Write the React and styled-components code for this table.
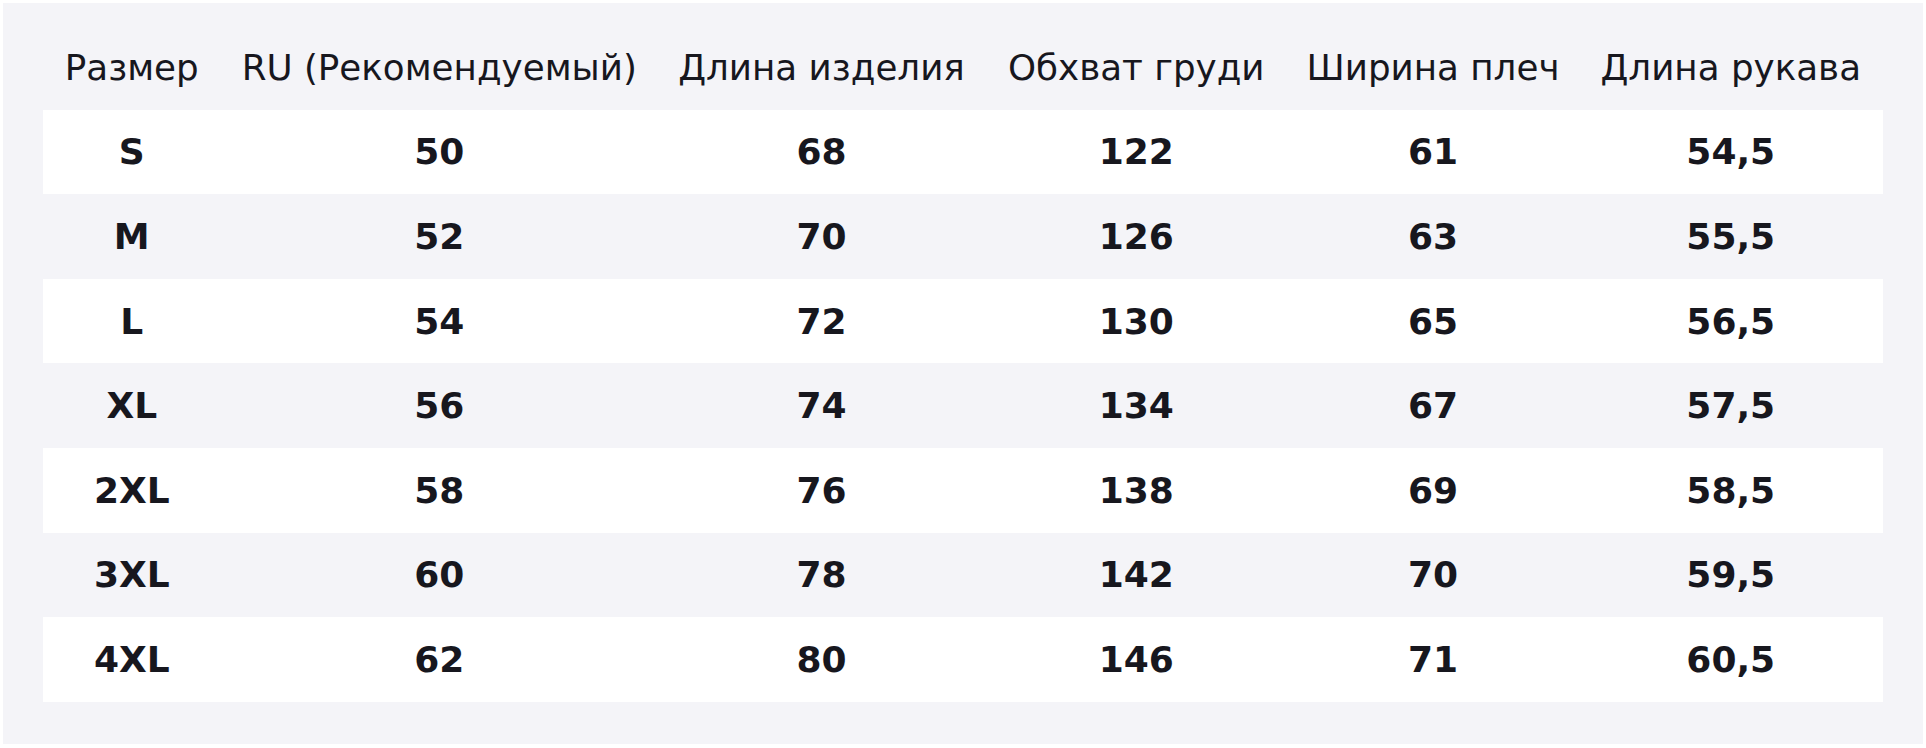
import styled, { createGlobalStyle } from "styled-components";

const GlobalStyle = createGlobalStyle`
  html, body {
    margin: 0;
    background: #ffffff;
  }
  body {
    padding: 3px;
    font-family: "DejaVu Sans", "Noto Sans", sans-serif;
  }
`;

const Panel = styled.div`
  width: 1920px;
  height: 741px;
  box-sizing: border-box;
  background: #f4f4f8;
  padding: 22px 40px 0 40px;
`;

const SizeTable = styled.table`
  width: 1840px;
  border-collapse: collapse;
  table-layout: fixed;
  color: #17171e;
`;

const HeadCell = styled.th`
  height: 84.6px;
  padding: 0;
  font-size: 35.7px;
  font-weight: 400;
  text-align: center;
  white-space: nowrap;
  vertical-align: middle;
`;

const Row = styled.tr`
  background: ${(p) => (p.$striped ? "#ffffff" : "transparent")};
`;

const Cell = styled.td`
  height: 84.6px;
  padding: 0;
  font-size: 36px;
  font-weight: 700;
  text-align: center;
  vertical-align: middle;
`;

const columns = [
  { title: "Размер", width: 177.5 },
  { title: "RU (Рекомендуемый)", width: 437.5 },
  { title: "Длина изделия", width: 327 },
  { title: "Обхват груди", width: 302.5 },
  { title: "Ширина плеч", width: 291 },
  { title: "Длина рукава", width: 304.5 },
];

const rows = [
  ["S", "50", "68", "122", "61", "54,5"],
  ["M", "52", "70", "126", "63", "55,5"],
  ["L", "54", "72", "130", "65", "56,5"],
  ["XL", "56", "74", "134", "67", "57,5"],
  ["2XL", "58", "76", "138", "69", "58,5"],
  ["3XL", "60", "78", "142", "70", "59,5"],
  ["4XL", "62", "80", "146", "71", "60,5"],
];

export default function App() {
  return (
    <>
      <GlobalStyle />
      <Panel>
        <SizeTable>
          <colgroup>
            {columns.map((c) => (
              <col key={c.title} style={{ width: c.width }} />
            ))}
          </colgroup>
          <thead>
            <tr>
              {columns.map((c) => (
                <HeadCell key={c.title}>{c.title}</HeadCell>
              ))}
            </tr>
          </thead>
          <tbody>
            {rows.map((r, i) => (
              <Row key={r[0]} $striped={i % 2 === 0}>
                {r.map((v, j) => (
                  <Cell key={j}>{v}</Cell>
                ))}
              </Row>
            ))}
          </tbody>
        </SizeTable>
      </Panel>
    </>
  );
}
